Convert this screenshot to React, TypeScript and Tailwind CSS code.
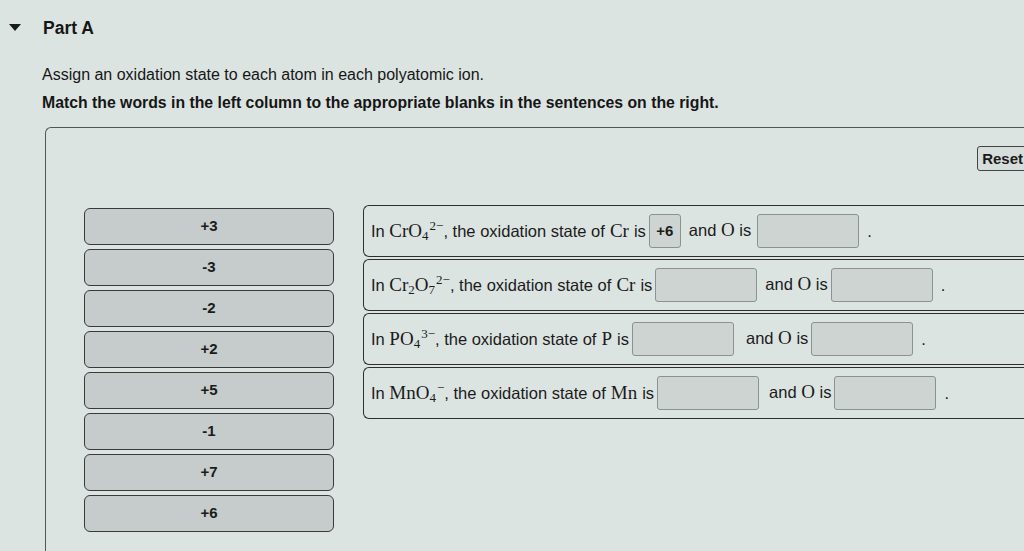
import React from 'react'

const choices = ['+3', '-3', '-2', '+2', '+5', '-1', '+7', '+6']

function Blank({ value, wide = true }: { value?: string; wide?: boolean }) {
  return (
    <span
      className={`inline-flex h-[34px] items-center justify-center rounded-[3px] border border-[#8c9291] bg-[#cdd4d2] text-[15px] font-bold text-[#1b1b1b] ${
        wide ? 'w-[102px]' : 'w-[32px]'
      }`}
    >
      {value}
    </span>
  )
}

function Ion({ base, sub, charge }: { base: string[]; sub: string[]; charge: string }) {
  // each base part is followed by its subscript
  return (
    <span className="font-['Liberation_Serif',serif] text-[19px]">
      {base.map((b, i) => (
        <React.Fragment key={i}>
          {b}
          {sub[i] && <sub className="text-[13px]">{sub[i]}</sub>}
        </React.Fragment>
      ))}
      <sup className="ml-[1px] text-[13px]">{charge}</sup>
    </span>
  )
}

function Sentence({
  ion,
  el,
  first,
  gapA,
  gapB = 'mr-[3px]',
}: {
  ion: React.ReactNode
  el: string
  first?: string
  gapA: string
  gapB?: string
}) {
  return (
    <div className="flex h-[52px] items-center rounded-l-md border border-r-0 border-[#2e2e2e] pl-[7px] text-[16.5px] text-[#1b1b1b]">
      <span>In {ion}, the oxidation state of </span>
      <span className="ml-[5px] font-['Liberation_Serif',serif] text-[19px]">{el}</span>
      <span className="ml-[5px] mr-[3px]">is</span>
      {first ? <Blank value={first} wide={false} /> : <Blank />}
      <span className={`${gapA} ${gapB} self-start pt-[10px]`}>
        and <span className="font-['Liberation_Serif',serif] text-[19px]">O</span> is
      </span>
      <Blank />
      <span className="ml-[8px]">.</span>
    </div>
  )
}

export default function App() {
  return (
    <div className="h-[551px] w-[1024px] overflow-hidden bg-[#dce4e2] font-['Liberation_Sans',Arial,sans-serif] text-[#161616]">
      {/* Part header */}
      <div className="mt-[16px] flex h-[24px] items-center">
        <svg width="12" height="8" viewBox="0 0 12 8" className="ml-[9px]">
          <polygon points="0,0 12,0 6,7" fill="#1a1a1a" />
        </svg>
        <span className="ml-[22px] text-[17.5px] font-semibold leading-[24px]">Part A</span>
      </div>

      <p className="ml-[42px] mt-[25px] text-[16px] leading-[20px]">
        Assign an oxidation state to each atom in each polyatomic ion.
      </p>
      <p className="ml-[42px] mt-[8px] text-[15.8px] font-bold leading-[20px]">
        Match the words in the left column to the appropriate blanks in the sentences on the right.
      </p>

      {/* Drag-and-drop area */}
      <div className="ml-[45px] mt-[14px] h-[500px] rounded-tl-md border-l border-t border-[#555]">
        <div className="flex justify-end pt-[18px]">
          <button className="mr-[-4px] h-[25px] rounded-[3px] border border-[#444] bg-[#d6dedc] px-[4px] text-[15px] font-bold leading-[20px] text-[#1b1b1b]">
            Reset
          </button>
        </div>

        <div className="mt-[34px] flex">
          {/* Choices */}
          <div className="ml-[38px] flex w-[250px] flex-col gap-[4px] pt-[3px]">
            {choices.map((c) => (
              <div
                key={c}
                className="flex h-[37px] items-center justify-center rounded-md border border-[#3a3a3a] bg-[#c5cccb] text-[15px] font-bold text-[#1b1b1b]"
              >
                {c}
              </div>
            ))}
          </div>

          {/* Sentences */}
          <div className="ml-[29px] flex flex-1 flex-col gap-[2px]">
            <Sentence
              ion={<Ion base={['CrO']} sub={['4']} charge="2−" />}
              el="Cr"
              first="+6"
              gapA="ml-[8px]"
              gapB="mr-[6px]"
            />
            <Sentence
              ion={<Ion base={['Cr', 'O']} sub={['2', '7']} charge="2−" />}
              el="Cr"
              gapA="ml-[8px]"
            />
            <Sentence
              ion={<Ion base={['PO']} sub={['4']} charge="3−" />}
              el="P"
              gapA="ml-[12px]"
            />
            <Sentence
              ion={<Ion base={['MnO']} sub={['4']} charge="−" />}
              el="Mn"
              gapA="ml-[10px]"
            />
          </div>
        </div>
      </div>
    </div>
  )
}
